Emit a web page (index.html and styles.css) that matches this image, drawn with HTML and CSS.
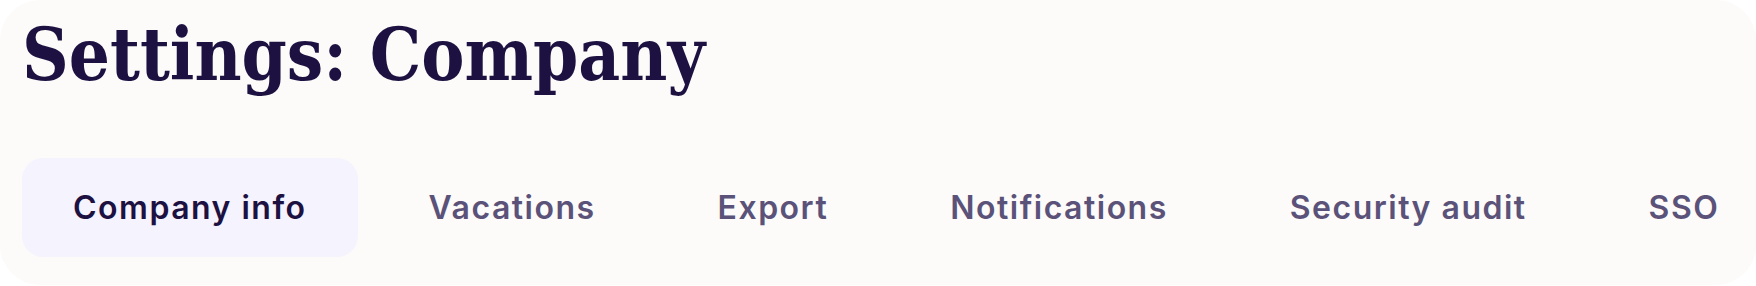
FILE: index.html
```html
<!DOCTYPE html>
<html lang="en">
<head>
<meta charset="utf-8">
<title>Settings: Company</title>
<link rel="stylesheet" href="styles.css">
</head>
<body>
<section class="card">
  <h1 class="title">Settings: Company</h1>
  <nav class="tabs">
    <a class="tab tab-active" href="#">Company info</a>
    <a class="tab" href="#">Vacations</a>
    <a class="tab" href="#">Export</a>
    <a class="tab" href="#">Notifications</a>
    <a class="tab" href="#">Security audit</a>
    <a class="tab" href="#">SSO</a>
  </nav>
</section>
</body>
</html>
```

FILE: styles.css
```css
html, body {
  margin: 0;
  padding: 0;
  background: #ffffff;
}

.card {
  box-sizing: border-box;
  width: 100%;
  height: 285px;
  background: #fcfbf9;
  border-radius: 40px;
  padding: 16px 21px 0 22px;
  display: flex;
  flex-direction: column;
  overflow: hidden;
}

.title {
  margin: 0;
  font-family: "DejaVu Serif", "Liberation Serif", serif;
  font-stretch: semi-condensed;
  font-weight: 700;
  font-size: 72px;
  line-height: 78px;
  color: #1c1141;
}

.tabs {
  margin-top: 64px;
  display: flex;
  gap: 20px;
}

.tab {
  box-sizing: border-box;
  flex: 0 0 auto;
  height: 99px;
  padding: 0 51px;
  display: flex;
  align-items: center;
  border-radius: 21px;
  white-space: nowrap;
  font-family: "Inter", "Noto Sans", sans-serif;
  font-weight: 600;
  font-size: 32px;
  letter-spacing: 1.5px;
  color: #5b5279;
  text-decoration: none;
}

.tab-active {
  background: #f5f3fd;
  color: #1c1141;
}
```
